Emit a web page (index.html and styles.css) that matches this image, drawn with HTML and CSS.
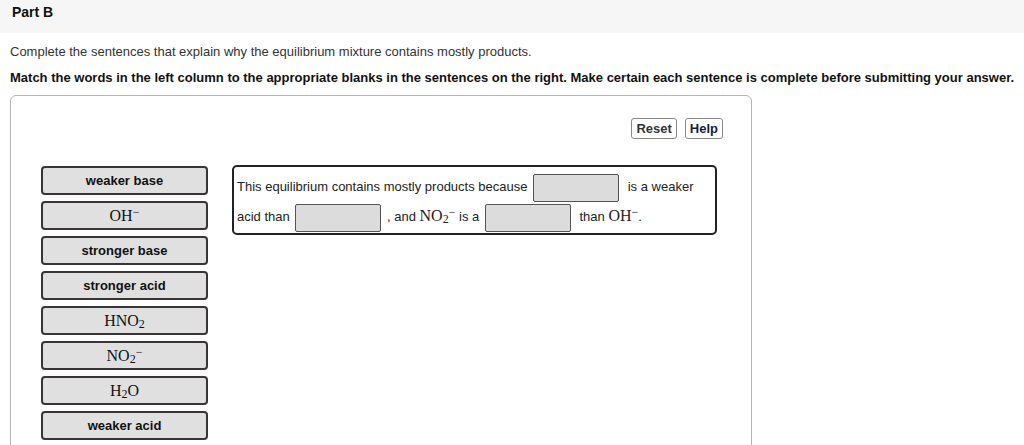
FILE: index.html
```html
<!DOCTYPE html>
<html lang="en">
<head>
    <meta charset="UTF-8">
    <title>Part B</title>
    <link rel="stylesheet" href="styles.css">
</head>
<body>
    <div class="partHeader">Part B</div>

    <div class="prompt">
        <p class="intro">Complete the sentences that explain why the equilibrium mixture contains mostly products.</p>
        <p class="instr">Match the words in the left column to the appropriate blanks in the sentences on the right. Make certain each sentence is complete before submitting your answer.</p>
    </div>

    <div class="panel">
        <div class="tools">
            <button class="tbtn">Reset</button>
            <button class="tbtn">Help</button>
        </div>

        <div class="work">
            <div class="choices">
                <div class="chip">weaker base</div>
                <div class="chip chem">OH<sup>&minus;</sup></div>
                <div class="chip">stronger base</div>
                <div class="chip">stronger acid</div>
                <div class="chip chem">HNO<sub>2</sub></div>
                <div class="chip chem">NO<sub>2</sub><sup>&minus;</sup></div>
                <div class="chip chem">H<sub>2</sub>O</div>
                <div class="chip">weaker acid</div>
            </div>

            <div class="sentence">
                <div class="line">
                    This equilibrium contains mostly products because
                    <span class="blank b1"></span>
                    is a weaker
                </div>
                <div class="line">
                    acid than
                    <span class="blank b2"></span>
                    , and <span class="chem">NO<sub>2</sub><sup>&minus;</sup></span> is a
                    <span class="blank b3"></span>
                    than <span class="chem">OH<sup>&minus;</sup></span>.
                </div>
            </div>
        </div>
    </div>
</body>
</html>
```

FILE: styles.css
```css
body{
    margin: 0;
    font-family: "Liberation Sans", Arial, sans-serif;
    font-size: 13px;
    color: #222;
    background: #fff;
}
.partHeader{
    height: 33px;
    line-height: 24px;
    background: #f6f6f6;
    padding-left: 12px;
    font-weight: bold;
    font-size: 14px;
    color: #111;
}
.prompt{
    padding: 0 10px;
}
.prompt p{
    margin: 0;
    line-height: 15px;
    white-space: nowrap;
}
.intro{
    padding-top: 11px;
    color: #333;
}
.instr{
    padding-top: 11px;
    font-weight: bold;
    color: #111;
}
.panel{
    margin: 10px 0 0 10px;
    width: 740px;
    height: 400px;
    border: 1px solid #b5b5b5;
    border-radius: 6px;
}
.tools{
    display: flex;
    justify-content: flex-end;
    gap: 8px;
    padding: 22px 28px 0 0;
}
.tbtn{
    font-family: "Liberation Sans", Arial, sans-serif;
    font-size: 13px;
    font-weight: bold;
    color: #333;
    background: #fff;
    border: 1px solid #888;
    border-radius: 3px;
    height: 21px;
    padding: 0 4px;
}
.tbtn:last-child{
    color: #1a1a40;
}
.work{
    display: flex;
    align-items: flex-start;
    gap: 24px;
    padding: 27px 0 0 30px;
}
.choices{
    display: flex;
    flex-direction: column;
    gap: 6px;
    width: 167px;
}
.chip{
    height: 25px;
    line-height: 25px;
    text-align: center;
    background: #e0e0e0;
    border: 2px solid #3a3535;
    border-radius: 4px;
    font-weight: bold;
    color: #111;
}
.chem{
    font-family: "Liberation Serif", "Times New Roman", serif;
    font-size: 16px;
    font-weight: normal;
}
.chem sub{
    font-size: 12px;
    vertical-align: -2px;
    line-height: 0;
}
.chem sup{
    font-size: 12px;
    vertical-align: 5px;
    line-height: 0;
}
.sentence{
    width: 478px;
    margin-top: -1px;
    border: 2px solid #222;
    border-radius: 5px;
    padding: 5px 0 3px 3px;
    color: #222;
}
.line{
    height: 29px;
    line-height: 29px;
    white-space: nowrap;
}
.blank{
    display: inline-block;
    vertical-align: middle;
    width: 84px;
    height: 26px;
    background: #dcdcdc;
    border: 1px solid #555;
    border-radius: 2px;
    margin: 0 2px;
}
.b1{
    margin-right: 5px;
}
.b3{
    margin-right: 5px;
}
```
